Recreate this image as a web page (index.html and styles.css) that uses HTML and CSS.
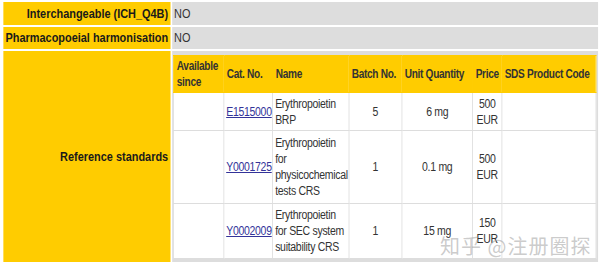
FILE: index.html
```html
<!DOCTYPE html>
<html lang="en">

<head>
    <meta charset="UTF-8">
    <title>Erythropoietin</title>
    <link rel="stylesheet" href="styles.css">
</head>

<body>
    <div class="page">
        <!-- the sheet is laid out wide and narrowed, like a condensed face -->
        <div class="sheet">
            <table class="details">
                <colgroup>
                    <col class="label-col">
                    <col>
                </colgroup>
                <tr class="row-short">
                    <th>Interchangeable (ICH_Q4B)</th>
                    <td>NO</td>
                </tr>
                <tr class="row-short">
                    <th>Pharmacopoeial harmonisation</th>
                    <td>NO</td>
                </tr>
                <tr>
                    <th>Reference standards</th>
                    <td class="ref-cell">
                        <!-- reference standards list -->
                        <table class="standards">
                            <colgroup>
                                <col class="c-since">
                                <col class="c-cat">
                                <col class="c-name">
                                <col class="c-batch">
                                <col class="c-qty">
                                <col class="c-price">
                                <col class="c-sds">
                            </colgroup>
                            <tr>
                                <th>Available since</th>
                                <th>Cat. No.</th>
                                <th>Name</th>
                                <th>Batch No.</th>
                                <th>Unit Quantity</th>
                                <th>Price</th>
                                <th>SDS Product Code</th>
                            </tr>
                            <tr class="row-first">
                                <td></td>
                                <td><a href="#">E1515000</a></td>
                                <td>Erythropoietin BRP</td>
                                <td class="center">5</td>
                                <td class="center">6 mg</td>
                                <td class="center">500 EUR</td>
                                <td></td>
                            </tr>
                            <tr class="row-tall">
                                <td></td>
                                <td><a href="#">Y0001725</a></td>
                                <td>Erythropoietin for physicochemical tests CRS</td>
                                <td class="center">1</td>
                                <td class="center">0.1 mg</td>
                                <td class="center">500 EUR</td>
                                <td></td>
                            </tr>
                            <tr>
                                <td></td>
                                <td><a href="#">Y0002009</a></td>
                                <td>Erythropoietin for SEC system suitability CRS</td>
                                <td class="center">1</td>
                                <td class="center">15 mg</td>
                                <td class="center">150 EUR</td>
                                <td></td>
                            </tr>
                        </table>
                    </td>
                </tr>
            </table>
        </div>

        <!-- watermark -->
        <div class="watermark">知乎 @注册圈探索</div>
    </div>
</body>

</html>
```

FILE: styles.css
```css
body {
    margin: 0;
    background: #ffffff;
    font-family: "Liberation Sans", Arial, sans-serif;
    font-size: 13px;
    color: #1a1a1a;
}

.page {
    width: 600px;
    height: 264px;
    overflow: hidden;
    position: relative;
}

/* widths below are in the un-narrowed space (x 1/0.84) */
.sheet {
    width: 714px;
    transform: scaleX(0.84);
    transform-origin: left top;
}

.details {
    border-collapse: separate;
    border-spacing: 2.4px 2px;
    table-layout: fixed;
    width: 712px;
    margin-left: 2.4px;
}

.label-col {
    width: 198.8px;
}

.details > tbody > tr > th {
    background: #ffcc00;
    text-align: right;
    padding: 0 3px 0 2px;
    font-weight: bold;
    white-space: nowrap;
}

.details > tbody > tr > td {
    background: #dddddd;
    padding: 0 2px;
    color: #333;
}

.row-short {
    height: 22.5px;
}

.details > tbody > tr > td.ref-cell {
    padding: 4px 2px 3px 1.2px;
}

.standards {
    border-collapse: collapse;
    table-layout: fixed;
    width: 502.4px;
    background: #fff;
}

.c-since { width: 59.5px; }
.c-cat { width: 58.3px; }
.c-name { width: 90.5px; }
.c-batch { width: 63.1px; }
.c-qty { width: 84.5px; }
.c-price { width: 34.5px; }
.c-sds { width: 111.9px; }

.standards th {
    background: #ffcc00;
    text-align: left;
    vertical-align: middle;
    font-weight: bold;
    font-size: 12px;
    letter-spacing: -0.35px;
    padding: 2px 0 2px 3px;
    line-height: 16px;
    border: 1px solid #ffcc00;
    white-space: nowrap;
}

.standards th:first-child {
    white-space: normal;
}

.standards td {
    border: 1px solid #dddddd;
    padding: 3px 1px 3px 2.4px;
    font-size: 12.5px;
    letter-spacing: -0.35px;
    line-height: 16px;
    vertical-align: middle;
    color: #333;
}

.standards .row-first td {
    padding-top: 2.5px;
    padding-bottom: 2.5px;
}

.standards .row-tall td {
    padding-top: 4px;
    padding-bottom: 3.5px;
}

.standards td.center {
    text-align: center;
    padding-left: 1px;
}

.standards a {
    color: #333399;
}

.watermark {
    position: absolute;
    left: 440px;
    top: 231px;
    font-family: "Noto Sans CJK SC", sans-serif;
    font-size: 20px;
    color: rgba(160, 160, 160, 0.55);
    letter-spacing: 1px;
}
```
